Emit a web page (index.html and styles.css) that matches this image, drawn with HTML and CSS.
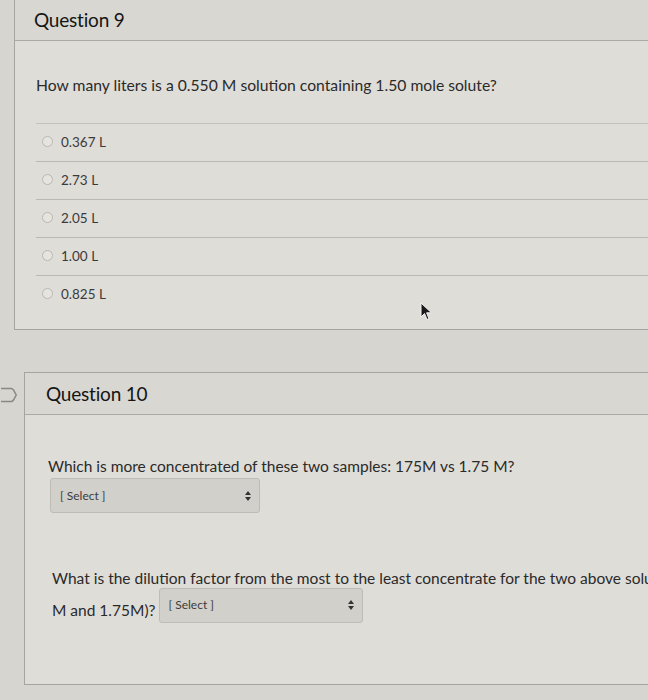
FILE: index.html
```html
<!DOCTYPE html>
<html>
<head>
<meta charset="utf-8">
<link rel="stylesheet" href="styles.css">
</head>
<body>
<div class="page">
  <section class="card q9">
    <header class="card-head"><h2 class="title">Question 9</h2></header>
    <div class="card-body">
      <p class="qtext">How many liters is a 0.550 M solution containing 1.50 mole solute?</p>
      <ul class="answers">
        <li class="answer"><span class="radio"></span><span>0.367 L</span></li>
        <li class="answer"><span class="radio"></span><span>2.73 L</span></li>
        <li class="answer"><span class="radio"></span><span>2.05 L</span></li>
        <li class="answer"><span class="radio"></span><span>1.00 L</span></li>
        <li class="answer"><span class="radio"></span><span>0.825 L</span></li>
      </ul>
    </div>
    <svg class="cursor" width="14" height="20" viewBox="0 0 14 20"><path d="M1 1 L1 15 L4.5 11.5 L7 17.5 L9 16.6 L6.6 10.8 L11.5 10.8 Z" fill="#1a1a1a" stroke="#f4f4f4" stroke-width="1"/></svg>
  </section>

  <section class="card q10">
    <svg class="flag" width="17" height="16" viewBox="0 0 17 16"><path d="M-2 1.5 H10 Q11.5 1.5 12.5 3 L15.2 8 L12.5 13 Q11.5 14.5 10 14.5 H-2" fill="none" stroke="#8a8884" stroke-width="1.5"/></svg>
    <header class="card-head"><h2 class="title">Question 10</h2></header>
    <div class="card-body">
      <p class="qtext">Which is more concentrated of these two samples: 175M vs 1.75 M?</p>
      <div class="select wide"><span>[ Select ]</span><span class="arrows"></span></div>
      <p class="qtext second">What is the dilution factor from the most to the least concentrate for the two above solutions (175</p>
      <div class="qrow"><span class="qtext">M and 1.75M)?</span><div class="select inline"><span>[ Select ]</span><span class="arrows"></span></div></div>
    </div>
  </section>
</div>
</body>
</html>
```
FILE: styles.css
```css
html, body {
  margin: 0;
  padding: 0;
  overflow: hidden;
}
body {
  background: #d7d5cf;
  font-family: Lato, "Open Sans", sans-serif;
  color: #2d2d2d;
  width: 648px;
  height: 700px;
}
.page {
  position: relative;
  width: 648px;
  height: 700px;
}
.card {
  position: relative;
  width: 700px;
  background: #dfddd8;
  border: 1px solid #a6a4a0;
  border-right: none;
  box-sizing: border-box;
}
.q9 {
  margin-left: 14px;
  margin-top: -2px;
  height: 332px;
}
.q10 {
  margin-left: 24px;
  margin-top: 42px;
  height: 313px;
}
.card-head {
  background: #d9d7d1;
  border-bottom: 1px solid #acaaa6;
  display: flex;
  align-items: center;
}
.q9 .card-head {
  height: 41px;
  padding-left: 19px;
}
.q10 .card-head {
  height: 41px;
  padding-left: 21px;
}
.title {
  margin: 0;
  font-size: 19px;
  font-weight: 400;
  color: #151515;
  letter-spacing: -0.2px;
}
.q9 .card-body {
  padding: 34px 0 0 21px;
}
.qtext {
  margin: 0;
  font-size: 15.5px;
  line-height: 20px;
  color: #2a2a2a;
}
.q9 .qtext {
  height: 48px;
  font-size: 15.7px;
}
.answers {
  list-style: none;
  margin: 0;
  padding: 0;
  width: 640px;
}
.answer {
  display: flex;
  align-items: center;
  gap: 8px;
  height: 35px;
  padding: 0 0 2px 6px;
  border-top: 1px solid #bab8b3;
  font-size: 13.5px;
  color: #3a3a3a;
}
.answer:first-child {
  border-top-color: #c4c2bd;
}
.radio {
  width: 9px;
  height: 9px;
  border: 1px solid #b9b7b2;
  border-radius: 50%;
  background: #e6e4df;
}
.cursor {
  position: absolute;
  left: 405px;
  top: 303px;
}
.flag {
  position: absolute;
  left: -24px;
  top: 14px;
}
.q10 .card-body {
  padding: 41px 0 0 23px;
}
.select {
  display: flex;
  align-items: center;
  justify-content: space-between;
  box-sizing: border-box;
  height: 35px;
  background: #d2d0ca;
  border: 1px solid #bebcb7;
  border-radius: 3px;
  padding: 0 8px 0 9px;
  font-size: 12px;
  color: #3c3c3c;
}
.select.wide {
  width: 210px;
  margin-top: 2px;
  margin-left: 2px;
}
.arrows {
  position: relative;
  width: 6px;
  height: 10px;
}
.arrows::before, .arrows::after {
  content: "";
  position: absolute;
  left: 0;
  border-left: 3px solid transparent;
  border-right: 3px solid transparent;
}
.arrows::before {
  top: 0;
  border-bottom: 4px solid #333;
}
.arrows::after {
  bottom: 0;
  border-top: 4px solid #333;
}
.qtext.second {
  margin-top: 49px;
  padding-left: 4px;
  line-height: 32px;
  white-space: nowrap;
}
.qrow {
  display: flex;
  align-items: flex-start;
  gap: 4px;
  padding-left: 4px;
}
.qrow .qtext {
  line-height: 32px;
}
.select.inline {
  width: 204px;
  margin-top: -6px;
  padding-left: 8px;
  padding-bottom: 2px;
}
```
